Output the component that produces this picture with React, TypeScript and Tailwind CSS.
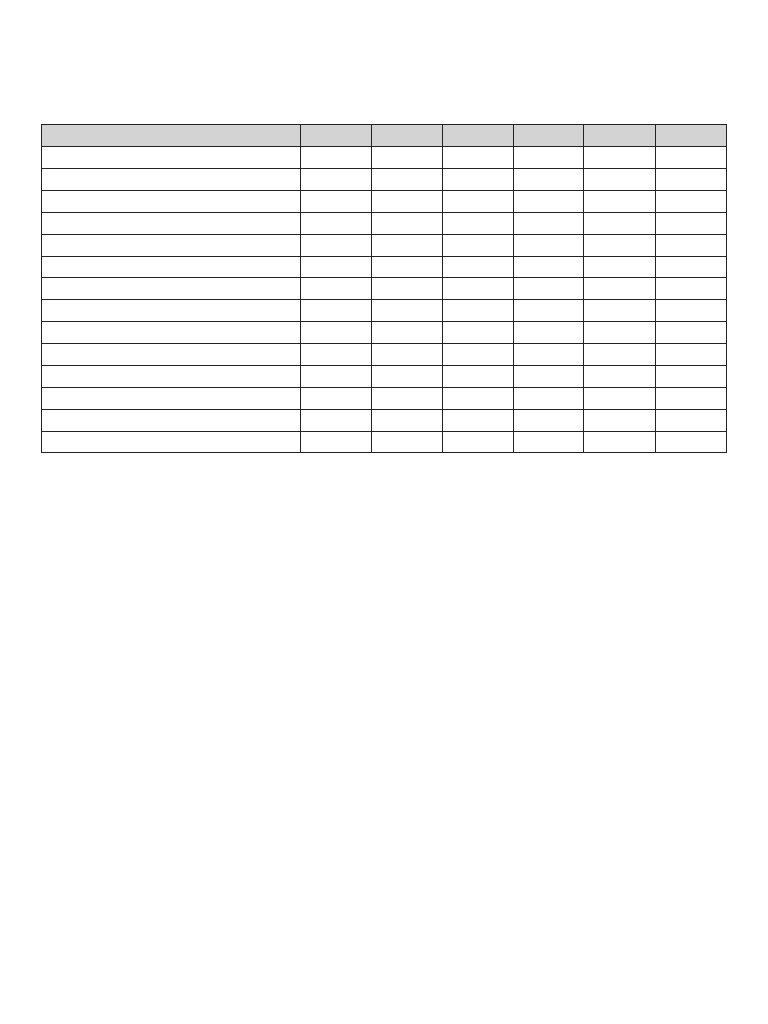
import React from "react";

const cols = "grid-cols-[259px_71px_71px_71px_70px_72px_71px]";
const bodyHeights = [22, 22, 22, 22, 22, 21, 22, 22, 22, 22, 22, 22, 22, 21];

function Row({ header, h }: { header?: boolean; h: number }) {
  return (
    <div className={`grid grid-cols-[259px_71px_71px_71px_70px_72px_71px]`} style={{ height: h }}>
      {Array.from({ length: 7 }).map((_, i) => (
        <div
          key={i}
          className={`border-r border-b border-[#222222] ${header ? "bg-[#d3d3d3]" : "bg-white"}`}
        />
      ))}
    </div>
  );
}

export default function App() {
  void cols;
  return (
    <div className="w-[768px] h-[1024px] bg-white font-['Liberation_Sans',sans-serif]">
      <div className="pt-[124px] pl-[41px]">
        <div className="inline-block border-l border-t border-[#222222]">
          <Row header h={22} />
          {bodyHeights.map((h, i) => (
            <Row key={i} h={h} />
          ))}
        </div>
      </div>
    </div>
  );
}
